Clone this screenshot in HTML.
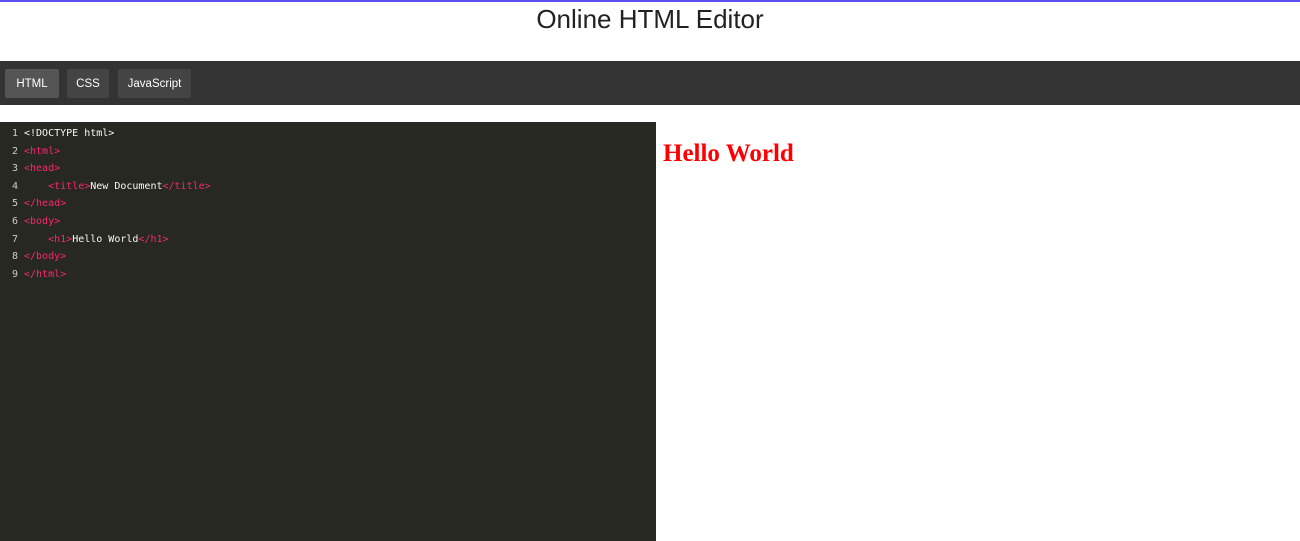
<!DOCTYPE html>
<html><head><style>
body{margin:0;width:1300px;height:541px;overflow:hidden;background:#fff;font-family:"Liberation Sans",sans-serif;}
.top{height:2px;background:#5b4ff0;}
h1.t{margin:0;height:59px;text-align:center;font-weight:400;font-size:26px;color:#222;line-height:34px;}
.bar{position:absolute;top:61px;left:0;width:1300px;height:44px;background:#333;}
.btn{position:absolute;top:8px;height:29px;line-height:31px;color:#fff;font-size:11.5px;text-align:center;border-radius:2px;background:#444;}
.ed{position:absolute;left:0;top:122px;width:656px;height:419px;background:#272822;font-family:"DejaVu Sans Mono","Liberation Mono",monospace;font-size:10px;color:#f8f8f2;}
.l{position:absolute;left:0;height:17px;line-height:17px;white-space:pre;}
.n{display:inline-block;width:18px;text-align:right;color:#ccc;margin-right:6px;}
.k{color:#f92672;}
.out{position:absolute;left:663px;top:140px;font-family:"Liberation Serif",serif;font-weight:bold;font-size:25px;color:#f00;}
</style></head><body>
<div class="top"></div>
<h1 class="t">Online HTML Editor</h1>
<div class="bar">
<div class="btn" style="left:5px;width:54px;background:#555">HTML</div>
<div class="btn" style="left:67px;width:42px">CSS</div>
<div class="btn" style="left:118px;width:73px">JavaScript</div>
</div>
<div class="ed">
<div class="l" style="top:3px"><span class="n">1</span>&lt;!DOCTYPE html&gt;</div>
<div class="l" style="top:21px"><span class="n">2</span><span class="k">&lt;html&gt;</span></div>
<div class="l" style="top:38px"><span class="n">3</span><span class="k">&lt;head&gt;</span></div>
<div class="l" style="top:56px"><span class="n">4</span>    <span class="k">&lt;title&gt;</span>New Document<span class="k">&lt;/title&gt;</span></div>
<div class="l" style="top:73px"><span class="n">5</span><span class="k">&lt;/head&gt;</span></div>
<div class="l" style="top:91px"><span class="n">6</span><span class="k">&lt;body&gt;</span></div>
<div class="l" style="top:109px"><span class="n">7</span>    <span class="k">&lt;h1&gt;</span>Hello World<span class="k">&lt;/h1&gt;</span></div>
<div class="l" style="top:126px"><span class="n">8</span><span class="k">&lt;/body&gt;</span></div>
<div class="l" style="top:144px"><span class="n">9</span><span class="k">&lt;/html&gt;</span></div>
</div>
<div class="out">Hello World</div>
</body></html>
